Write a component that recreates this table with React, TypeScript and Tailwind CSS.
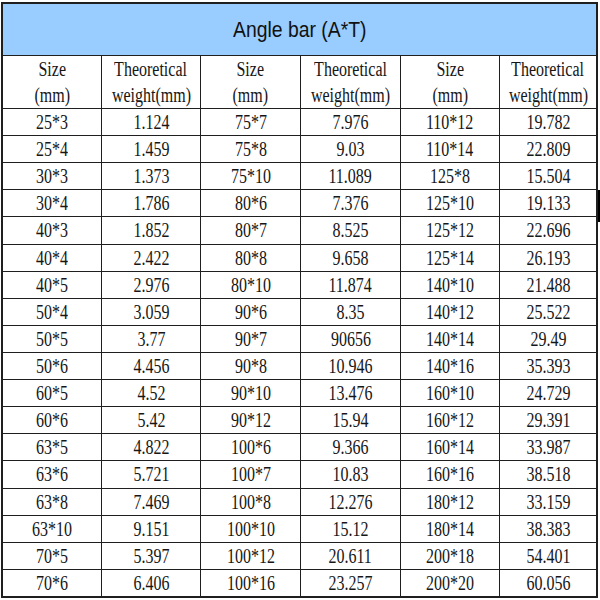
import React from "react";

const rows: string[][] = [
  ["25*3", "1.124", "75*7", "7.976", "110*12", "19.782"],
  ["25*4", "1.459", "75*8", "9.03", "110*14", "22.809"],
  ["30*3", "1.373", "75*10", "11.089", "125*8", "15.504"],
  ["30*4", "1.786", "80*6", "7.376", "125*10", "19.133"],
  ["40*3", "1.852", "80*7", "8.525", "125*12", "22.696"],
  ["40*4", "2.422", "80*8", "9.658", "125*14", "26.193"],
  ["40*5", "2.976", "80*10", "11.874", "140*10", "21.488"],
  ["50*4", "3.059", "90*6", "8.35", "140*12", "25.522"],
  ["50*5", "3.77", "90*7", "90656", "140*14", "29.49"],
  ["50*6", "4.456", "90*8", "10.946", "140*16", "35.393"],
  ["60*5", "4.52", "90*10", "13.476", "160*10", "24.729"],
  ["60*6", "5.42", "90*12", "15.94", "160*12", "29.391"],
  ["63*5", "4.822", "100*6", "9.366", "160*14", "33.987"],
  ["63*6", "5.721", "100*7", "10.83", "160*16", "38.518"],
  ["63*8", "7.469", "100*8", "12.276", "180*12", "33.159"],
  ["63*10", "9.151", "100*10", "15.12", "180*14", "38.383"],
  ["70*5", "5.397", "100*12", "20.611", "200*18", "54.401"],
  ["70*6", "6.406", "100*16", "23.257", "200*20", "60.056"],
];

const headers: [string, string][] = [
  ["Size", "(mm)"],
  ["Theoretical", "weight(mm)"],
  ["Size", "(mm)"],
  ["Theoretical", "weight(mm)"],
  ["Size", "(mm)"],
  ["Theoretical", "weight(mm)"],
];

export default function App() {
  return (
    <div className="relative w-[600px] h-[600px] bg-white pt-[2px] pl-[1px]">
      <div className="grid h-[596px] w-[597px] grid-cols-[98px_98px_99px_99px_98px_minmax(0,1fr)] grid-rows-[51px_52px_repeat(18,minmax(0,1fr))] gap-px border-2 border-[#1f1f1f] bg-[#1f1f1f]">
        <div className="col-span-6 flex items-center justify-center bg-[#99ccff]">
          <span className="inline-block scale-x-[0.88] text-[22px] text-[#111] [font-family:'Liberation_Sans',Arial,sans-serif]">
            Angle bar (A*T)
          </span>
        </div>
        {headers.map((h, i) => (
          <div
            key={"h" + i}
            className="flex flex-col items-center justify-center bg-white text-[20px] leading-[26px] text-[#161616] [font-family:'Liberation_Serif','Times_New_Roman',serif]"
          >
            <span className="inline-block scale-x-[0.8] whitespace-nowrap">{h[0]}</span>
            <span className="inline-block scale-x-[0.8] whitespace-nowrap">{h[1]}</span>
          </div>
        ))}
        {rows.map((r, ri) =>
          r.map((c, ci) => (
            <div
              key={ri + "-" + ci}
              className="flex items-center justify-center bg-white text-[20px] leading-none text-[#161616] [font-family:'Liberation_Serif','Times_New_Roman',serif]"
            >
              <span className="inline-block scale-x-[0.8] whitespace-nowrap">{c}</span>
            </div>
          ))
        )}
      </div>
      <div className="absolute right-0 top-[190px] h-[32px] w-[2px] bg-black" />
    </div>
  );
}
